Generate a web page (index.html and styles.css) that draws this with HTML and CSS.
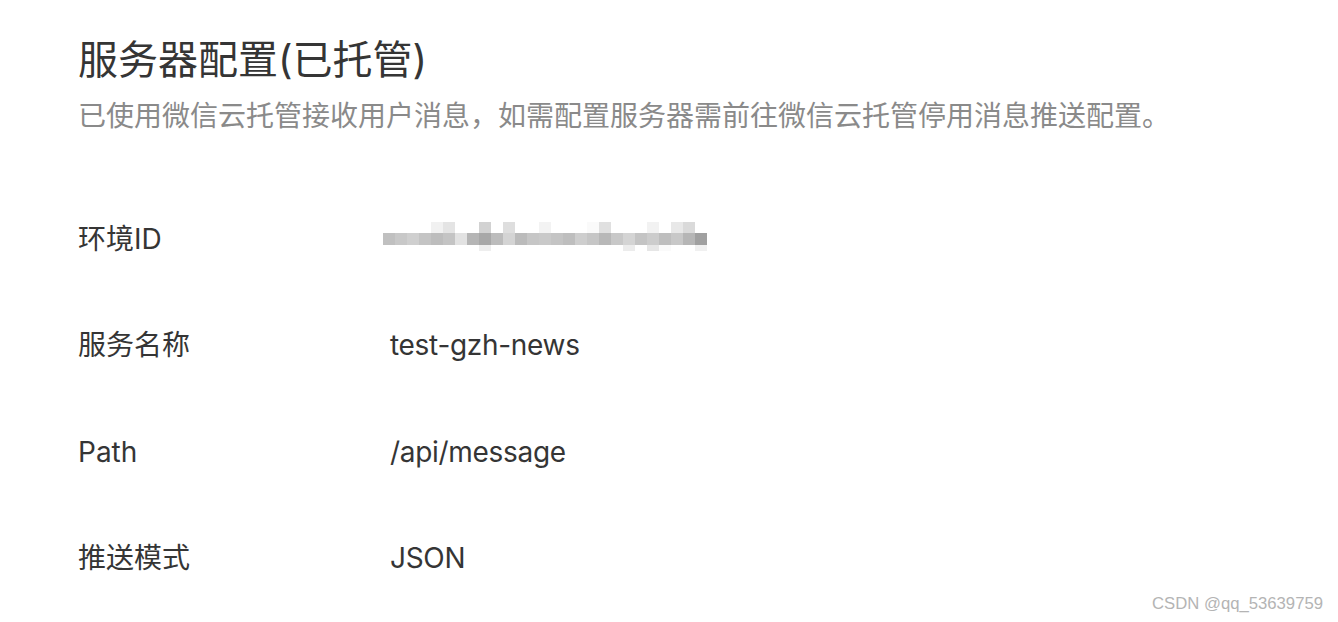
FILE: index.html
```html
<!DOCTYPE html>
<html lang="zh-CN">
<head>
<meta charset="UTF-8">
<meta name="viewport" content="width=device-width, initial-scale=1.0">
<title>服务器配置</title>
<link rel="stylesheet" href="styles.css">
</head>
<body>
<div class="page">
  <h1>服务器配置(已托管)</h1>
  <p class="desc">已使用微信云托管接收用户消息，如需配置服务器需前往微信云托管停用消息推送配置。</p>
  <dl class="info">
    <dt>环境ID</dt>
    <dd><div class="mosaic" id="envId"></div></dd>
    <dt>服务名称</dt>
    <dd class="val">test-gzh-news</dd>
    <dt>Path</dt>
    <dd class="val">/api/message</dd>
    <dt>推送模式</dt>
    <dd class="val">JSON</dd>
  </dl>
</div>
<div class="watermark">CSDN @qq_53639759</div>
<script>
// env id is masked, draw it as a block mosaic
const shades=[
  [255,255,255,255,241,228,255,255,210,255,222,255,255,243,255,255,255,250,224,255,255,255,242,255,232,218,255],
  [192,200,207,196,189,196,226,181,168,188,212,187,198,201,196,190,206,198,184,200,212,196,204,190,200,182,160],
  [255,255,255,255,255,255,255,255,238,255,255,255,255,255,255,255,255,255,255,255,236,255,230,250,255,255,240]
];
const env=document.getElementById('envId');
shades.forEach(row=>row.forEach(v=>{
  const c=document.createElement('span');
  c.style.background=`rgb(${v},${v},${v})`;
  env.appendChild(c);
}));
</script>
</body>
</html>
```

FILE: styles.css
```css
:root {
  --text-color: #353535;
  --muted: #8a8a8a;
  --font: Inter, "Noto Sans CJK SC", sans-serif;
}
body { margin: 0; background: #fff; color: var(--text-color); font-family: var(--font); }
.page { padding: 36px 0 0 78px; }
h1 { margin: 0; font-size: 40px; line-height: 48px; font-weight: 400; }
.desc { margin: 12px 0 0; font-size: 28px; line-height: 40px; color: var(--muted); }
.info {
  display: grid; grid-template-columns: 312px 1fr; row-gap: 66.33px;
  margin: 83px 0 0; font-size: 28px; line-height: 40px;
}
.info dt, .info dd { margin: 0; }
.info .val { letter-spacing: -0.3px; }
.mosaic {
  display: grid; grid-template-columns: repeat(27, 12px); grid-template-rows: 11px 12px 6px;
  width: 324px; margin: 3px 0 0 -7px;
}
.watermark {
  position: absolute; right: 15px; bottom: 8px;
  font-family: "Liberation Sans", sans-serif; font-size: 16.7px; color: #b4b4b4;
}
```
